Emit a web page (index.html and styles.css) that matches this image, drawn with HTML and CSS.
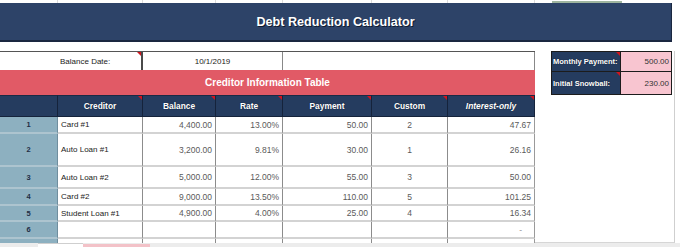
FILE: index.html
```html
<!DOCTYPE html>
<html>
<head>
<meta charset="utf-8">
<link rel="stylesheet" href="styles.css">
</head>
<body>
<div class="sheet">
  <div class="strip">
    <span></span><span></span><span></span><span></span><span></span><span></span><span></span><span class="gap"></span><span class="sel"></span>
  </div>
  <div class="banner"><h1>Debt Reduction Calculator</h1></div>
  <div class="spacer"></div>
  <div class="main">
    <div class="left">
      <div class="balance-row">
        <div class="bcell label note">Balance Date:</div>
        <div class="bcell date">10/1/2019</div>
        <div class="bcell"></div>
      </div>
      <div class="band">Creditor Information Table</div>
      <div class="grid">
        <div class="hd idx"></div>
        <div class="hd note">Creditor</div>
        <div class="hd note">Balance</div>
        <div class="hd note">Rate</div>
        <div class="hd note">Payment</div>
        <div class="hd note">Custom</div>
        <div class="hd note ital">Interest-only</div>

        <div class="c idx r1">1</div><div class="c name r1">Card #1</div><div class="c num r1">4,400.00</div><div class="c num r1">13.00%</div><div class="c num r1">50.00</div><div class="c mid r1">2</div><div class="c num r1">47.67</div>
        <div class="c idx r2">2</div><div class="c name r2">Auto Loan #1</div><div class="c num r2">3,200.00</div><div class="c num r2">9.81%</div><div class="c num r2">30.00</div><div class="c mid r2">1</div><div class="c num r2">26.16</div>
        <div class="c idx r3">3</div><div class="c name r3">Auto Loan #2</div><div class="c num r3">5,000.00</div><div class="c num r3">12.00%</div><div class="c num r3">55.00</div><div class="c mid r3">3</div><div class="c num r3">50.00</div>
        <div class="c idx r4">4</div><div class="c name r4">Card #2</div><div class="c num r4">9,000.00</div><div class="c num r4">13.50%</div><div class="c num r4">110.00</div><div class="c mid r4">5</div><div class="c num r4">101.25</div>
        <div class="c idx r5">5</div><div class="c name r5">Student Loan #1</div><div class="c num r5">4,900.00</div><div class="c num r5">4.00%</div><div class="c num r5">25.00</div><div class="c mid r5">4</div><div class="c num r5">16.34</div>
        <div class="c idx r6">6</div><div class="c name r6"></div><div class="c num r6"></div><div class="c num r6"></div><div class="c num r6"></div><div class="c mid r6"></div><div class="c dash r6">-</div>
        <div class="c idx r7"></div><div class="c r7"></div><div class="c r7"></div><div class="c r7"></div><div class="c r7"></div><div class="c r7"></div><div class="c r7"></div>
      </div>
    </div>
    <div class="right">
      <div class="panel">
        <div class="plabel note">Monthly Payment:</div>
        <div class="pval">500.00</div>
        <div class="plabel note second">Initial Snowball:</div>
        <div class="pval second">230.00</div>
      </div>
    </div>
  </div>
  <div class="tabs">
    <span class="tab-gray"></span><span class="tab-white"></span><span class="tab-pink"></span>
  </div>
</div>
</body>
</html>
```

FILE: styles.css
```css
* { box-sizing: border-box; }
html, body { margin: 0; padding: 0; background: #fff; }
body { width: 680px; height: 247px; overflow: hidden; font-family: "Liberation Sans", Arial, sans-serif; }
.sheet { width: 680px; }

.strip { height: 3px; display: grid; grid-template-columns: 58px 85px 73px 67px 89px 76px 87px 17px 70px; }
.strip span { border-right: 1px solid #dcdcdc; }
.strip .gap { border-right: none; }
.strip .sel { border-right: none; border-bottom: 2px solid #9fb59f; }

.banner { width: 672px; height: 39px; background: #2d4368; border-right: 1px solid #1a2740; border-bottom: 2px solid #1a2740; display: flex; align-items: center; justify-content: center; }
.banner h1 { margin: 0; font-size: 12.6px; font-weight: bold; color: #fff; text-shadow: 1px 1px 0 #101b30; padding-top: 1px; }

.spacer { height: 9px; }

.main { display: flex; height: 192px; }
.left { width: 535px; }
.right { width: 140px; border-right: 1px solid #cfcfcf; border-bottom: 1px solid #d6d6d6; padding-left: 16px; }

.balance-row { display: grid; grid-template-columns: 143px 140px 252px; height: 19px; border-top: 1px solid #555; }
.bcell { position: relative; border-right: 1px solid #888; font-size: 8px; color: #222; display: flex; align-items: center; }
.bcell.label { border-right: 2px solid #4a4a4a; padding-left: 60px; }
.bcell.date { justify-content: center; }

.band { height: 25px; background: #e15a66; color: #fff; font-weight: bold; font-size: 10px; display: flex; align-items: center; justify-content: center; }

.grid { display: grid; grid-template-columns: 58px 85px 73px 67px 89px 76px 87px; grid-template-rows: 22px 17px 33px 22px 17px 16px 17px 4px; overflow: hidden; }
.hd { position: relative; background: #253c5f; border-right: 1px solid #15233b; border-top: 1px solid #1a2a45; border-bottom: 1px solid #15233b; color: #fff; font-weight: bold; font-size: 8.4px; display: flex; align-items: center; justify-content: center; text-shadow: 0 0 1px #0d1628; }
.hd.ital { font-style: italic; }
.hd:last-child { border-right: 1px solid #15233b; }

.c { border-right: 1px solid #8c8c8c; border-bottom: 2px solid #d3d3d3; display: flex; align-items: center; font-size: 8.5px; color: #5a5a5a; overflow: hidden; }
.c:nth-child(7n) { border-right: 1px solid #9a9a9a; }
.c.idx { background: #8db0c0; border-right: 1px solid #6f8e9e; border-bottom: 2px solid #adc4cf; justify-content: center; font-weight: bold; font-size: 7.5px; color: #1e2d44; }
.c.name { padding-left: 3px; font-size: 8px; color: #222; }
.c.num { justify-content: flex-end; padding-right: 3px; }
.c.mid { justify-content: center; }
.c.dash { justify-content: flex-end; padding-right: 12px; color: #999; }
.c.r7 { border-bottom: none; }

.note::after { content: ""; position: absolute; top: 0; right: 0; border-top: 4px solid #d0141e; border-left: 4px solid transparent; }

.panel { width: 121px; margin-left: 0; display: grid; grid-template-columns: 69px 50px; grid-template-rows: 19px 23px; border: 1px solid #1c1c1c; }
.plabel { position: relative; background: #253c5f; color: #fff; font-weight: bold; font-size: 7.5px; display: flex; align-items: center; padding-left: 1px; border-right: 1px solid #1c1c1c; text-shadow: 0 0 1px #0d1628; white-space: nowrap; }
.pval { background: #f8c5d0; color: #333; font-size: 8px; display: flex; align-items: center; justify-content: flex-end; padding-right: 2px; }
.second { border-top: 1px solid #1c1c1c; }

.tabs { display: flex; height: 4px; margin-top: 0; background: #ececec; }
.tab-gray { width: 38px; }
.tab-white { width: 45px; background: #fff; border-top: 1px solid #cfcfcf; }
.tab-pink { width: 67px; background: #f3c2c8; margin-top: 1px; }
```
